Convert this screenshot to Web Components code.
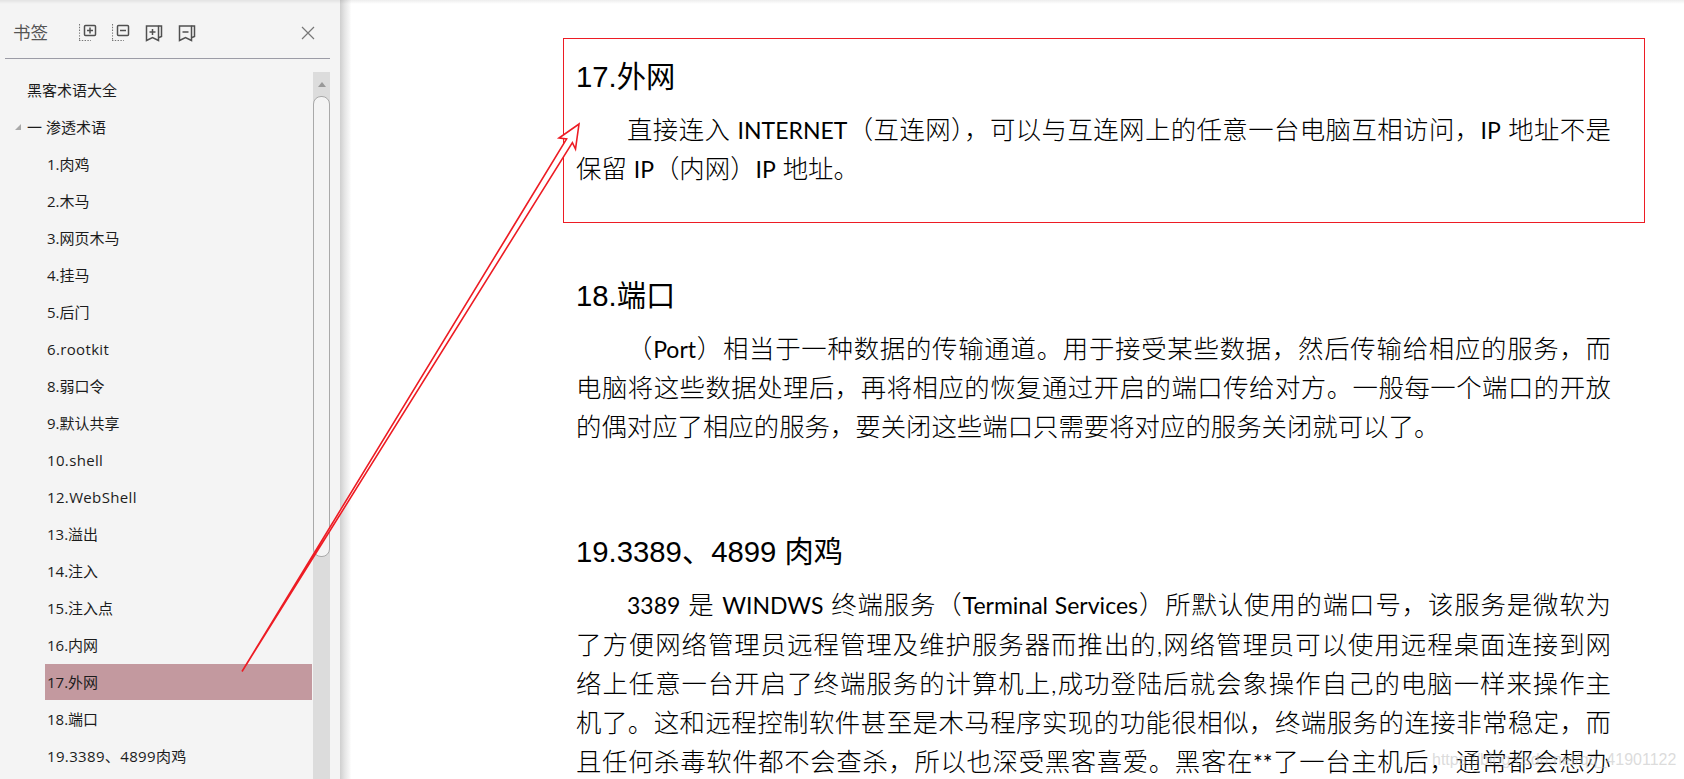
<!DOCTYPE html>
<html lang="zh-CN">
<head>
<meta charset="utf-8">
<title>书签</title>
<style>
html,body{margin:0;height:779px;overflow:hidden;background:#fff}
</style>
</head>
<body>
<reader-app>
  <bookmark-panel slot="side" title-text="书签">
    <bookmark-item level="0">黑客术语大全</bookmark-item>
    <bookmark-item level="0" open>一 渗透术语</bookmark-item>
    <bookmark-item>1.肉鸡</bookmark-item>
    <bookmark-item>2.木马</bookmark-item>
    <bookmark-item>3.网页木马</bookmark-item>
    <bookmark-item>4.挂马</bookmark-item>
    <bookmark-item>5.后门</bookmark-item>
    <bookmark-item latin>6.rootkit</bookmark-item>
    <bookmark-item>8.弱口令</bookmark-item>
    <bookmark-item>9.默认共享</bookmark-item>
    <bookmark-item latin>10.shell</bookmark-item>
    <bookmark-item latin>12.WebShell</bookmark-item>
    <bookmark-item>13.溢出</bookmark-item>
    <bookmark-item>14.注入</bookmark-item>
    <bookmark-item>15.注入点</bookmark-item>
    <bookmark-item>16.内网</bookmark-item>
    <bookmark-item selected>17.外网</bookmark-item>
    <bookmark-item>18.端口</bookmark-item>
    <bookmark-item latin>19.3389、4899肉鸡</bookmark-item>
  </bookmark-panel>
  <doc-page slot="main">
    <doc-section boxed heading="17.外网">
      <doc-line indent justify>直接连入 <la-t>INTERNET</la-t>（互连网），可以与互连网上的任意一台电脑互相访问，<la-t>IP</la-t> 地址不是</doc-line>
      <doc-line>保留 <la-t>IP</la-t>（内网）<la-t>IP</la-t> 地址。</doc-line>
    </doc-section>
    <doc-section heading="18.端口" style="margin-top:54.5px">
      <doc-line indent justify>（<la-t>Port</la-t>）相当于一种数据的传输通道。用于接受某些数据，然后传输给相应的服务，而</doc-line>
      <doc-line justify>电脑将这些数据处理后，再将相应的恢复通过开启的端口传给对方。一般每一个端口的开放</doc-line>
      <doc-line>的偶对应了相应的服务，要关闭这些端口只需要将对应的服务关闭就可以了。</doc-line>
    </doc-section>
    <doc-section heading="19.3389、4899 肉鸡" style="margin-top:88px">
      <doc-line indent justify><la-t>3389</la-t> 是 <la-t>WINDWS</la-t> 终端服务（<la-t>Terminal Services</la-t>）所默认使用的端口号，该服务是微软为</doc-line>
      <doc-line justify>了方便网络管理员远程管理及维护服务器而推出的,网络管理员可以使用远程桌面连接到网</doc-line>
      <doc-line justify>络上任意一台开启了终端服务的计算机上,成功登陆后就会象操作自己的电脑一样来操作主</doc-line>
      <doc-line justify>机了。这和远程控制软件甚至是木马程序实现的功能很相似，终端服务的连接非常稳定，而</doc-line>
      <doc-line justify>且任何杀毒软件都不会查杀，所以也深受黑客喜爱。黑客在<la-t>**</la-t>了一台主机后，通常都会想办</doc-line>
    </doc-section>
  </doc-page>
  <callout-arrow slot="overlay"></callout-arrow>
  <water-mark slot="overlay">https://blog.csdn.net/qq_41901122</water-mark>
</reader-app>
<script>
function shadow(el, html){ el.attachShadow({mode:'open'}).innerHTML = html; }

customElements.define('reader-app', class extends HTMLElement{
  constructor(){ super(); shadow(this, `<style>
    :host{display:grid;grid-template-columns:340px 11px 1fr;width:1684px;height:779px;position:relative;overflow:hidden;background:#fff}
    .shade{background:linear-gradient(90deg,#cfcfcf,#e6e6e6 45%,#f8f8f8 90%,#fff)}
    .top{position:absolute;left:0;right:0;top:0;height:4px;background:linear-gradient(180deg,rgba(0,0,0,.07),rgba(0,0,0,0));pointer-events:none}
  </style><slot name="side"></slot><div class="shade"></div><slot name="main"></slot><div class="top"></div><slot name="overlay"></slot>`); }
});

customElements.define('panel-icon', class extends HTMLElement{
  constructor(){ super();
    const k=this.getAttribute('kind');
    const minus='<path d="M8 6.5h6"/>', mark='<path d="M4.5 8h6"/>';
    const tree='<path d="M.5 0v16M0 16.5h12" stroke-dasharray="1.4 1.4" stroke="#777" stroke-width="1.1"/><rect x="5.5" y="1.5" width="11" height="10" rx="1"/>';
    const book='<path d="M1.5 2H13.5V16.5L7.5 13.6 1.5 16.5Z"/><path d="M13.5 2H16.5V12.5L14 13.5"/>';
    const map={
      'tree-plus':tree+minus+'<path d="M11 3.5v6"/>',
      'tree-minus':tree+minus,
      'mark-plus':book+mark+'<path d="M7.5 5v6"/>',
      'mark-minus':book+mark
    };
    shadow(this, `<style>:host{display:block;width:18px;height:18px}svg{display:block}</style>
    <svg width="18" height="18" viewBox="0 0 18 18" fill="none" stroke="#505050" stroke-width="1.5">${map[k]}</svg>`);
  }
});

customElements.define('bookmark-panel', class extends HTMLElement{
  constructor(){ super(); shadow(this, `<style>
    :host{display:flex;flex-direction:column;height:779px;background:#f4f4f4;overflow:hidden;font-family:"Open Sans","Noto Sans CJK SC",sans-serif}
    header{flex:none;display:flex;align-items:center;height:58px;margin:0 10px 0 5px;border-bottom:1px solid #9c9ca6;box-sizing:content-box}
    h2{margin:0 31px 0 9px;width:34px;font:400 17.5px/1 "Noto Sans CJK SC",sans-serif;color:#555;white-space:nowrap;position:relative;top:3px;left:-1px}
    .tools{display:flex;gap:15px;position:relative;top:4px}
    .close{margin-left:auto;margin-right:15px;position:relative;top:4px;display:block}
    .body{flex:1;display:flex;min-height:0}
    .list{flex:none;width:313px;padding-top:12px;box-sizing:border-box;overflow:hidden}
    .bar{flex:none;width:17px;margin-top:13px;background:#dcdcdc;display:flex;flex-direction:column;align-items:center}
    .up{flex:none;height:24px;display:flex;align-items:center;justify-content:center}
    .thumb{flex:none;width:17px;height:461px;box-sizing:border-box;background:#f4f4f4;border:1px solid #a9a9a9;border-radius:8px}
  </style>
  <header>
    <h2>${this.getAttribute('title-text')}</h2>
    <div class="tools">
      <panel-icon kind="tree-plus"></panel-icon><panel-icon kind="tree-minus"></panel-icon>
      <panel-icon kind="mark-plus"></panel-icon><panel-icon kind="mark-minus"></panel-icon>
    </div>
    <svg class="close" width="14" height="14" viewBox="0 0 14 14" stroke="#777" stroke-width="1.2"><path d="M1 1l12 12M13 1L1 13"/></svg>
  </header>
  <div class="body">
    <div class="list"><slot></slot></div>
    <div class="bar">
      <div class="up"><svg width="8" height="5" viewBox="0 0 8 5"><path d="M4 0l4 5H0z" fill="#999"/></svg></div>
      <div class="thumb"></div>
    </div>
  </div>`); }
});

customElements.define('bookmark-item', class extends HTMLElement{
  constructor(){ super();
    const top=this.getAttribute('level')==='0';
    const open=this.hasAttribute('open');
    shadow(this, `<style>
      :host{display:flex;align-items:center;height:37px;box-sizing:border-box;font-size:15px;color:#1c1c1c;white-space:nowrap;
        padding-left:${top?27:47}px;position:relative}
      :host([latin]){letter-spacing:.35px}
      :host([selected]) .bg{display:block}
      .bg{display:none;position:absolute;left:45px;right:1px;top:1px;bottom:0;background:#c3999f}
      .t{position:relative}
      svg{position:absolute;left:15px;top:16px}
    </style><div class="bg"></div>${open?'<svg width="6" height="6" viewBox="0 0 6 6"><path d="M0 6L6 0V6Z" fill="#a9a9a9"/></svg>':''}<span class="t"><slot></slot></span>`);
  }
});

customElements.define('doc-page', class extends HTMLElement{
  constructor(){ super(); shadow(this, `<style>
    :host{display:block;height:779px;overflow:hidden;box-sizing:border-box;padding:38px 0 0 225px;background:#fff;color:#000;
      font-family:Lato,"Noto Sans CJK SC",sans-serif}
  </style><slot></slot>`); }
});

customElements.define('doc-section', class extends HTMLElement{
  constructor(){ super(); shadow(this, `<style>
    :host{display:block;width:1035px}
    :host([boxed]){height:163px;margin-left:-13px;padding:20px 33px 0 12px;border:1px solid #ed1c24;box-sizing:content-box}
    h3{margin:0 0 15px;font:400 29.3px/36px "Liberation Sans","Noto Sans CJK SC",sans-serif;color:#000;white-space:nowrap}
  </style><h3>${this.getAttribute('heading')}</h3><slot></slot>`); }
});

customElements.define('doc-line', class extends HTMLElement{
  constructor(){ super(); shadow(this, `<style>
    :host{display:block;font-size:25.4px;line-height:39.25px;font-weight:300;height:39.25px;text-justify:inter-character}
    :host([indent]){padding-left:51px}
    :host([justify]){text-align:justify;text-align-last:justify}
  </style><slot></slot>`); }
});

customElements.define('la-t', class extends HTMLElement{
  constructor(){ super(); shadow(this, `<style>
    :host{display:inline;font-size:23px;font-weight:400}
  </style><slot></slot>`); }
});

customElements.define('callout-arrow', class extends HTMLElement{
  constructor(){ super(); shadow(this, `<style>
    :host{position:absolute;left:0;top:0;width:1684px;height:779px;pointer-events:none;display:block}
    svg{display:block}
  </style><svg width="1684" height="779" viewBox="0 0 1684 779">
    <path d="M242 671.5L566.6 139 559 138 579 124 575.5 149 572.4 142.7Z" fill="#fff" stroke="#ed1c24" stroke-width="1.6" stroke-linejoin="miter"/>
  </svg>`); }
});

customElements.define('water-mark', class extends HTMLElement{
  constructor(){ super(); shadow(this, `<style>
    :host{position:absolute;left:1432px;top:750px;font:16px/20px "Liberation Sans",sans-serif;color:rgba(190,190,190,.55);white-space:nowrap;pointer-events:none}
  </style><slot></slot>`); }
});
</script>
</body>
</html>
